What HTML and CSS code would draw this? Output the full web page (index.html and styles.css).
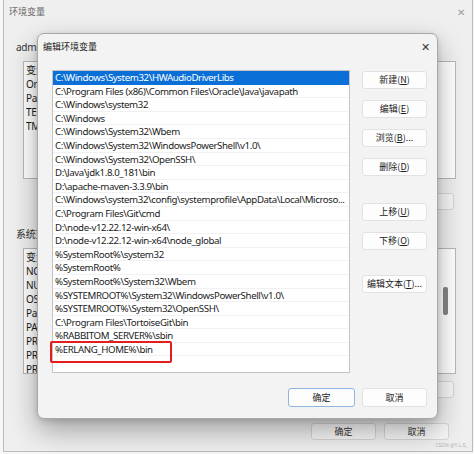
FILE: index.html
```html
<!DOCTYPE html>
<html lang="zh-CN">
<head>
<meta charset="utf-8">
<title>编辑环境变量</title>
<link rel="stylesheet" href="styles.css">
</head>
<body>
<div class="bgwin">
  <div class="bg-title"><span>环境变量</span><span class="bg-close">✕</span></div>
  <div class="bg-body">
    <div class="sec-label">administrator 的用户变量(U)</div>
    <div class="bg-list user-list">
      <div class="bg-row">变量</div>
      <div class="bg-row">OneDrive</div>
      <div class="bg-row">Path</div>
      <div class="bg-row">TEMP</div>
      <div class="bg-row">TMP</div>
    </div>
    <div class="bg-btns"><span class="bg-btn">新建(N)...</span><span class="bg-btn">编辑(E)...</span><span class="bg-btn">删除(D)</span></div>
    <div class="sec-label">系统变量(S)</div>
    <div class="bg-list sys-list">
      <div class="bg-row">变量</div>
      <div class="bg-row">NODE_PATH</div>
      <div class="bg-row">NUMBER_OF_PROCESSORS</div>
      <div class="bg-row">OS</div>
      <div class="bg-row">Path</div>
      <div class="bg-row">PATHEXT</div>
      <div class="bg-row">PROCESSOR_ARCHITECTURE</div>
      <div class="bg-row">PROCESSOR_IDENTIFIER</div>
      <div class="bg-row">PROCESSOR_LEVEL</div>
      <div class="scroll-thumb"></div>
    </div>
    <div class="bg-btns"><span class="bg-btn">新建(W)...</span><span class="bg-btn">编辑(I)...</span><span class="bg-btn">删除(L)</span></div>
    <div class="bg-footer"><span class="bg-btn wide">确定</span><span class="bg-btn wide">取消</span></div>
  </div>
  <div class="watermark">CSDN @Y.L.G_</div>
</div>

<div class="dialog">
  <div class="dlg-title"><span>编辑环境变量</span><span class="dlg-close">✕</span></div>
  <div class="dlg-body">
    <div class="path-list">
      <div class="prow selected">C:\Windows\System32\HWAudioDriverLibs</div>
      <div class="prow">C:\Program Files (x86)\Common Files\Oracle\Java\javapath</div>
      <div class="prow">C:\Windows\system32</div>
      <div class="prow">C:\Windows</div>
      <div class="prow">C:\Windows\System32\Wbem</div>
      <div class="prow">C:\Windows\System32\WindowsPowerShell\v1.0\</div>
      <div class="prow">C:\Windows\System32\OpenSSH\</div>
      <div class="prow">D:\Java\jdk1.8.0_181\bin</div>
      <div class="prow">D:\apache-maven-3.3.9\bin</div>
      <div class="prow">C:\Windows\system32\config\systemprofile\AppData\Local\Microso...</div>
      <div class="prow">C:\Program Files\Git\cmd</div>
      <div class="prow">D:\node-v12.22.12-win-x64\</div>
      <div class="prow">D:\node-v12.22.12-win-x64\node_global</div>
      <div class="prow">%SystemRoot%\system32</div>
      <div class="prow">%SystemRoot%</div>
      <div class="prow">%SystemRoot%\System32\Wbem</div>
      <div class="prow">%SYSTEMROOT%\System32\WindowsPowerShell\v1.0\</div>
      <div class="prow">%SYSTEMROOT%\System32\OpenSSH\</div>
      <div class="prow">C:\Program Files\TortoiseGit\bin</div>
      <div class="prow">%RABBITOM_SERVER%\sbin</div>
      <div class="prow">%ERLANG_HOME%\bin</div>
      <div class="red-mark"></div>
    </div>
    <div class="side-btns">
      <span class="btn">新建(<u>N</u>)</span>
      <span class="btn">编辑(<u>E</u>)</span>
      <span class="btn">浏览(<u>B</u>)...</span>
      <span class="btn">删除(<u>D</u>)</span>
      <span class="btn gap">上移(<u>U</u>)</span>
      <span class="btn">下移(<u>O</u>)</span>
      <span class="btn gap2">编辑文本(<u>T</u>)...</span>
    </div>
  </div>
  <div class="dlg-footer">
    <span class="btn default">确定</span>
    <span class="btn">取消</span>
  </div>
</div>
</body>
</html>
```

FILE: styles.css
```css
* { box-sizing: border-box; }
html, body {
  margin: 0;
  width: 474px;
  height: 454px;
  overflow: hidden;
  background: #f7f7f7;
  font-family: "Noto Sans", "Noto Sans CJK SC", sans-serif;
  color: #1b1b1b;
}
.bgwin {
  position: absolute;
  left: 3px;
  top: -4px;
  width: 470px;
  height: 456px;
  background: #efefef;
  border: 1px solid #bdbdbd;
  overflow: hidden;
}
.bg-title {
  height: 32px;
  display: flex;
  align-items: center;
  justify-content: space-between;
  padding: 0 7px 4px 5px;
  font-size: 9px;
  color: #6a6a6a;
  font-family: "Noto Sans CJK SC", sans-serif;
}
.bg-close { font-size: 10px; color: #9a9a9a; }
.bg-body {
  padding: 11px 16px 0 12px;
}
.sec-label {
  height: 14px;
  line-height: 14px;
  font-size: 10px;
  letter-spacing: -0.3px;
  font-family: "Noto Sans", "Noto Sans CJK SC", sans-serif;
  color: #333;
  white-space: nowrap;
}
.bg-list {
  position: relative;
  margin: 7px 0 0 7px;
  background: #fff;
  border: 1px solid #b8b8b8;
  padding: 1px 2px;
}
.user-list { height: 118px; }
.sys-list { height: 126px; }
.bg-row {
  height: 14px;
  line-height: 14px;
  font-size: 10px;
  letter-spacing: -0.3px;
  white-space: nowrap;
  overflow: hidden;
}
.scroll-thumb {
  position: absolute;
  right: 7px;
  top: 38px;
  width: 5px;
  height: 28px;
  background: #858585;
  border-radius: 2px;
}
.bg-btns {
  display: flex;
  justify-content: flex-end;
  gap: 8px;
  margin-top: 14px;
  margin-bottom: 17px;
  padding-right: 2px;
}
.sys-list + .bg-btns { margin-top: 7px; margin-bottom: 25px; }
.bg-btn {
  width: 66px;
  height: 17px;
  line-height: 15px;
  text-align: center;
  font-size: 9px;
  color: #333;
  background: #f7f7f7;
  border: 1px solid #d6d6d6;
  border-radius: 3px;
  font-family: "Noto Sans CJK SC", sans-serif;
}
.bg-footer {
  display: flex;
  justify-content: flex-end;
  gap: 8px;
  padding-right: 7px;
}
.bg-footer .bg-btn { width: 65px; }
.watermark {
  position: absolute;
  right: 4px;
  bottom: 3px;
  font-size: 5px;
  color: #b5b5b5;
}

/* foreground dialog */
.dialog {
  position: absolute;
  left: 37px;
  top: 33px;
  width: 401px;
  height: 386px;
  background: #f3f3f3;
  border: 1px solid #a8a8a8;
  border-radius: 7px;
  box-shadow: 0 12px 28px rgba(0,0,0,0.32), 0 2px 6px rgba(0,0,0,0.14);
}
.dlg-title {
  height: 24px;
  display: flex;
  align-items: center;
  justify-content: space-between;
  padding: 0 7px 0 5px;
  font-size: 9px;
  font-family: "Noto Sans CJK SC", sans-serif;
  color: #1b1b1b;
}
.dlg-close { font-size: 11px; color: #333; }
.dlg-body {
  display: flex;
  gap: 12px;
  padding: 12px 10px 0 14px;
}
.path-list {
  position: relative;
  width: 298px;
  height: 303px;
  background: #fff;
  border: 1px solid #c4c4c4;
  padding: 0;
}
.prow {
  height: 13.6px;
  line-height: 13px;
  font-size: 9.7px;
  letter-spacing: -0.4px;
  padding-left: 2px;
  white-space: nowrap;
  overflow: hidden;
  border-bottom: 1px solid #f1f1f1;
  color: #1b1b1b;
}
.prow.selected {
  background: #0a6fd6;
  color: #fff;
  border-bottom-color: #0a6fd6;
}
.red-mark {
  position: absolute;
  left: -3px;
  top: 270px;
  width: 122px;
  height: 22px;
  border: 2px solid #e41d1d;
  border-radius: 2px;
}
.side-btns {
  display: flex;
  flex-direction: column;
  gap: 11px;
  padding-top: 1px;
}
.btn {
  display: block;
  width: 65px;
  height: 18px;
  line-height: 16px;
  text-align: center;
  font-size: 9px;
  font-family: "Noto Sans CJK SC", sans-serif;
  color: #222;
  background: #fdfdfd;
  border: 1px solid #e2e2e2;
  border-radius: 3px;
}
.btn u { text-decoration: underline; }
.side-btns .gap { margin-top: 16px; }
.side-btns .gap2 { margin-top: 14px; }
.dlg-footer {
  display: flex;
  justify-content: flex-end;
  gap: 7px;
  padding: 15px 10px 0 0;
}
.dlg-footer .btn { height: 19px; line-height: 17px; }
.dlg-footer .default {
  width: 67px;
  border-color: #8fb4dd;
}
```
